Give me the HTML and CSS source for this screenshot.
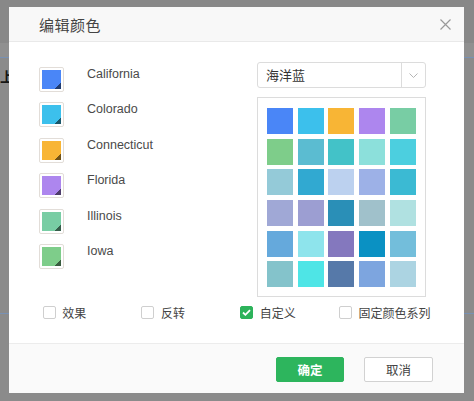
FILE: index.html
```html
<!DOCTYPE html>
<html lang="zh">
<head>
<meta charset="utf-8">
<link rel="stylesheet" href="styles.css">
</head>
<body>
<div class="page">
  <div class="page-top"></div>
  <div class="page-line"></div>
  <div class="page-text">上柔性数据</div>
  <div class="page-line2"></div>
</div>

<div class="dialog">
  <div class="dlg-head">
    <span class="dlg-title">编辑颜色</span>
    <svg class="close" width="11" height="11" viewBox="0 0 11 11"><path d="M0.5 0.5L10.5 10.5M10.5 0.5L0.5 10.5" stroke="#9a9a9a" stroke-width="1.2" fill="none"/></svg>
  </div>
  <div class="dlg-body">
    <div class="cols">
      <ul class="series">
        <li class="srow"><span class="sw"><i style="background:#4a86f7"></i></span><span class="sname">California</span></li>
        <li class="srow"><span class="sw"><i style="background:#3cc0ec"></i></span><span class="sname">Colorado</span></li>
        <li class="srow"><span class="sw"><i style="background:#f8b535"></i></span><span class="sname">Connecticut</span></li>
        <li class="srow"><span class="sw"><i style="background:#ad86ee"></i></span><span class="sname">Florida</span></li>
        <li class="srow"><span class="sw"><i style="background:#78cda4"></i></span><span class="sname">Illinois</span></li>
        <li class="srow"><span class="sw"><i style="background:#7ecd8a"></i></span><span class="sname">Iowa</span></li>
      </ul>
      <div class="picker">
        <div class="select">
          <span class="sel-text">海洋蓝</span>
          <span class="sel-arrow"><svg width="9" height="5" viewBox="0 0 9 5"><path d="M0.5 0.5L4.5 4.5L8.5 0.5" stroke="#b5b5b5" stroke-width="1" fill="none"/></svg></span>
        </div>
        <div class="palette">
          <span class="cell" style="background:#4a86f7"></span>
          <span class="cell" style="background:#3cc0ec"></span>
          <span class="cell" style="background:#f8b535"></span>
          <span class="cell" style="background:#ad86ee"></span>
          <span class="cell" style="background:#78cda4"></span>
          <span class="cell" style="background:#7ecd8a"></span>
          <span class="cell" style="background:#5bbcd1"></span>
          <span class="cell" style="background:#43c2c8"></span>
          <span class="cell" style="background:#8ce0db"></span>
          <span class="cell" style="background:#4ccfdf"></span>
          <span class="cell" style="background:#94cad8"></span>
          <span class="cell" style="background:#31a9d1"></span>
          <span class="cell" style="background:#bcd1ef"></span>
          <span class="cell" style="background:#9db1e7"></span>
          <span class="cell" style="background:#3bbad3"></span>
          <span class="cell" style="background:#a0a8d6"></span>
          <span class="cell" style="background:#9c9ed2"></span>
          <span class="cell" style="background:#2a8fb7"></span>
          <span class="cell" style="background:#a0c1cb"></span>
          <span class="cell" style="background:#b0e1e1"></span>
          <span class="cell" style="background:#65a9dc"></span>
          <span class="cell" style="background:#8ee4ec"></span>
          <span class="cell" style="background:#8478be"></span>
          <span class="cell" style="background:#0a91c3"></span>
          <span class="cell" style="background:#73bedb"></span>
          <span class="cell" style="background:#84c3cb"></span>
          <span class="cell" style="background:#4ee5e6"></span>
          <span class="cell" style="background:#5679a9"></span>
          <span class="cell" style="background:#7da5df"></span>
          <span class="cell" style="background:#acd4e2"></span>
        </div>
      </div>
    </div>
    <div class="checks">
      <label class="chk"><span class="box"></span><span class="chk-text">效果</span></label>
      <label class="chk"><span class="box"></span><span class="chk-text">反转</span></label>
      <label class="chk"><span class="box on"><svg width="9" height="7" viewBox="0 0 9 7"><path d="M1 3.5L3.4 5.8L8 1.2" stroke="#fff" stroke-width="1.8" fill="none"/></svg></span><span class="chk-text">自定义</span></label>
      <label class="chk"><span class="box"></span><span class="chk-text">固定颜色系列</span></label>
    </div>
  </div>
  <div class="dlg-foot">
    <button class="btn btn-ok">确定</button>
    <button class="btn btn-cancel">取消</button>
  </div>
</div>
</body>
</html>
```

FILE: styles.css
```css
* { box-sizing: border-box; }
html, body { margin: 0; padding: 0; }
body {
  width: 474px;
  height: 401px;
  overflow: hidden;
  background: #8b8b8b;
  font-family: "Liberation Sans", "Noto Sans CJK SC", sans-serif;
}
.page { height: 401px; }
.page-top {
  height: 43px;
  background: #888;
}
.page-line {
  height: 15px;
  background: #909090;
  border-bottom: 1px solid #7891b4;
}
.page-text {
  margin-top: 10px;
  margin-left: 0;
  font-family: "Noto Sans CJK SC", sans-serif;
  font-size: 14px;
  line-height: 16px;
  color: #161616;
  font-weight: bold;
  white-space: nowrap;
}
.page-line2 {
  margin-top: 229px;
  height: 1px;
  background: #7891b4;
}

.dialog {
  position: fixed;
  top: 7px;
  left: 9px;
  width: 455px;
  height: 386px;
  background: #fff;
  display: flex;
  flex-direction: column;
}
.dlg-head {
  height: 35px;
  flex: none;
  background: #f8f8f8;
  border-bottom: 1px solid #e9e9e9;
  display: flex;
  align-items: center;
  justify-content: space-between;
  padding: 0 13px 0 30px;
}
.dlg-title {
  font-family: "Noto Sans CJK SC", sans-serif;
  font-size: 15px;
  color: #444;
  letter-spacing: 0.5px;
}
.close { display: block; margin-top: 1px; }

.dlg-body {
  flex: 1;
  padding: 20px 38px 0 30px;
}
.cols {
  display: flex;
  justify-content: space-between;
}
.series {
  list-style: none;
  margin: 5px 0 0 0;
  padding: 0;
}
.srow {
  display: flex;
  align-items: flex-start;
  height: 35.4px;
}
.sw {
  width: 25px;
  height: 25px;
  border: 1px solid #e2ddd8;
  padding: 2px;
  background: #fff;
  border-radius: 2px;
  display: block;
}
.sw i {
  display: block;
  width: 100%;
  height: 100%;
  position: relative;
}
.sw i::after {
  content: "";
  position: absolute;
  right: 0;
  bottom: 0;
  width: 7px;
  height: 7px;
  background: linear-gradient(to bottom right, transparent 50%, rgba(0,0,0,0.55) 50%);
}
.sname {
  margin-left: 23px;
  font-size: 12.5px;
  line-height: 16px;
  color: #4a4a4a;
  margin-top: -1px;
}

.picker { width: 169px; }
.select {
  height: 26px;
  border: 1px solid #dcdcdc;
  border-radius: 3px;
  display: flex;
  align-items: stretch;
}
.sel-text {
  flex: 1;
  padding-left: 8px;
  font-family: "Noto Sans CJK SC", sans-serif;
  font-size: 13px;
  line-height: 24px;
  color: #333;
}
.sel-arrow {
  width: 24px;
  border-left: 1px solid #dcdcdc;
  display: flex;
  align-items: center;
  justify-content: center;
}
.palette {
  margin-top: 9px;
  height: 200px;
  border: 1px solid #dcdcdc;
  padding: 10px 9px 9px 9px;
  display: grid;
  grid-template-columns: repeat(5, 26px);
  grid-auto-rows: 26px;
  gap: 4.7px;
}
.cell { display: block; }

.checks {
  display: flex;
  margin-top: 9px;
  padding-left: 3.7px;
}
.chk {
  width: 98.8px;
  flex: none;
  display: flex;
  align-items: center;
  height: 13px;
}
.box {
  width: 13px;
  height: 13px;
  border: 1px solid #cfcfcf;
  border-radius: 2px;
  background: #fff;
  display: flex;
  align-items: center;
  justify-content: center;
  flex: none;
}
.box.on {
  background: #2db35b;
  border-color: #2db35b;
}
.chk-text {
  margin-left: 6.5px;
  font-family: "Noto Sans CJK SC", sans-serif;
  font-size: 12px;
  color: #444;
  letter-spacing: 0;
  white-space: nowrap;
}

.dlg-foot {
  height: 50px;
  flex: none;
  border-top: 1px solid #ececec;
  background: #fafafa;
  display: flex;
  justify-content: flex-end;
  align-items: flex-start;
  padding: 13px 31px 0 0;
  gap: 20px;
}
.btn {
  height: 25px;
  width: 68px;
  font-family: "Noto Sans CJK SC", sans-serif;
  font-size: 12.5px;
  border-radius: 2px;
  padding: 0;
  cursor: pointer;
}
.btn-ok {
  background: #2db55d;
  border: 1px solid #2db55d;
  color: #fff;
  font-weight: bold;
}
.btn-cancel {
  width: 69px;
  background: #fff;
  border: 1px solid #d2d2d2;
  color: #444;
}
```
